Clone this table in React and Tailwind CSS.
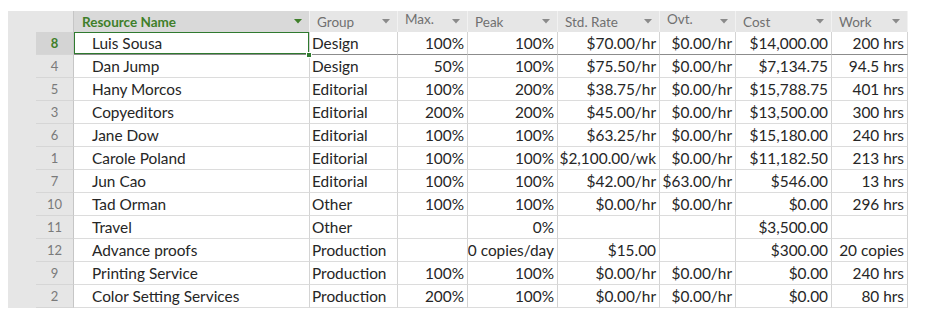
import React from "react";

const columns = [
    { label: "Resource Name", w: "w-[236px]", align: "left" },
    { label: "Group", w: "w-[88px]", align: "left" },
    { label: "Max.", w: "w-[70px]", align: "right", raised: true },
    { label: "Peak", w: "w-[90px]", align: "right" },
    { label: "Std. Rate", w: "w-[102px]", align: "right" },
    { label: "Ovt.", w: "w-[76px]", align: "right", raised: true },
    { label: "Cost", w: "w-[96px]", align: "right" },
    { label: "Work", w: "w-[76px]", align: "right" },
];

const rows = [
    [8, "Luis Sousa", "Design", "100%", "100%", "$70.00/hr", "$0.00/hr", "$14,000.00", "200 hrs"],
    [4, "Dan Jump", "Design", "50%", "100%", "$75.50/hr", "$0.00/hr", "$7,134.75", "94.5 hrs"],
    [5, "Hany Morcos", "Editorial", "100%", "200%", "$38.75/hr", "$0.00/hr", "$15,788.75", "401 hrs"],
    [3, "Copyeditors", "Editorial", "200%", "200%", "$45.00/hr", "$0.00/hr", "$13,500.00", "300 hrs"],
    [6, "Jane Dow", "Editorial", "100%", "100%", "$63.25/hr", "$0.00/hr", "$15,180.00", "240 hrs"],
    [1, "Carole Poland", "Editorial", "100%", "100%", "$2,100.00/wk", "$0.00/hr", "$11,182.50", "213 hrs"],
    [7, "Jun Cao", "Editorial", "100%", "100%", "$42.00/hr", "$63.00/hr", "$546.00", "13 hrs"],
    [10, "Tad Orman", "Other", "100%", "100%", "$0.00/hr", "$0.00/hr", "$0.00", "296 hrs"],
    [11, "Travel", "Other", "", "0%", "", "", "$3,500.00", ""],
    [12, "Advance proofs", "Production", "", "20 copies/day", "$15.00", "", "$300.00", "20 copies"],
    [9, "Printing Service", "Production", "100%", "100%", "$0.00/hr", "$0.00/hr", "$0.00", "240 hrs"],
    [2, "Color Setting Services", "Production", "200%", "100%", "$0.00/hr", "$0.00/hr", "$0.00", "80 hrs"],
];

const Arrow = ({ green }) => (
    <svg width="8" height="5" viewBox="0 0 8 5" className="shrink-0">
        <polygon points="0,0 8,0 4,4.5" fill={green ? "#3f7f2a" : "#8a8a8a"} />
    </svg>
);

export default function App() {
    return (
        <div className="relative w-[930px] h-[331px] bg-white pt-[11px] pl-[8px] font-['Lato','Liberation_Sans',sans-serif] text-[#262626]">
            <div className="flex flex-col w-[900px]">
                {/* header */}
                <div className="flex h-[21px] bg-[#e6e6e6]">
                    <div className="w-[66px] shrink-0 border-r border-[#c6c6c6]" />
                    {columns.map((c, i) => (
                        <div
                            key={c.label}
                            className={`${c.w} shrink-0 flex items-center justify-between border-r border-[#f2f2f2] pl-[7px] pr-[7px] text-[13.5px] ${i === 0 ? "bg-[#d9d9d9] text-[#3f7f2a] font-bold pl-[8px]" : "text-[#707070]"}`}
                        >
                            <span className={c.raised ? "-mt-[4px]" : "mt-[2px]"}>{c.label}</span>
                            <Arrow green={i === 0} />
                        </div>
                    ))}
                    <div className="w-[2px] bg-[#eeeeee]" />
                </div>
                {/* rows */}
                {rows.map((r, ri) => {
                    const selected = ri === 0;
                    return (
                        <div key={ri} className="flex h-[23px]">
                            <div className="w-[28px] shrink-0 bg-[#e6e6e6]" />
                            <div
                                className={`w-[38px] shrink-0 flex items-center justify-center pt-[1px] border-r border-b border-r-[#c6c6c6] border-b-[#d6d6d6] text-[13px] ${selected ? "bg-[#d4d4d4] text-[#3f7f2a] font-bold" : "bg-[#e6e6e6] text-[#7a7a7a]"}`}
                            >
                                {r[0]}
                            </div>
                            {columns.map((c, ci) => {
                                const v = r[ci + 1];
                                const isName = ci === 0;
                                return (
                                    <div
                                        key={ci}
                                        className={`${c.w} shrink-0 relative flex items-center pt-[2px] overflow-hidden whitespace-nowrap border-r border-b border-r-[#d4d4d4] ${selected ? "border-b-[#8c8c8c]" : "border-b-[#dcdcdc]"} text-[15.4px] ${c.align === "right" ? "justify-end pr-[3px]" : isName ? "pl-[18px]" : "pl-[2px]"}`}
                                    >
                                        <span className="shrink-0">{v}</span>
                                        {selected && isName && (
                                            <div className="absolute -left-px -top-px w-[237px] h-[24px] border-2 border-[#2f7a2f]" />
                                        )}
                                    </div>
                                );
                            })}
                        </div>
                    );
                })}
            </div>
            {/* fill handle */}
            <div className="absolute left-[306px] top-[52px] w-[6px] h-[6px] bg-[#2f7a2f] border border-white" />
        </div>
    );
}
